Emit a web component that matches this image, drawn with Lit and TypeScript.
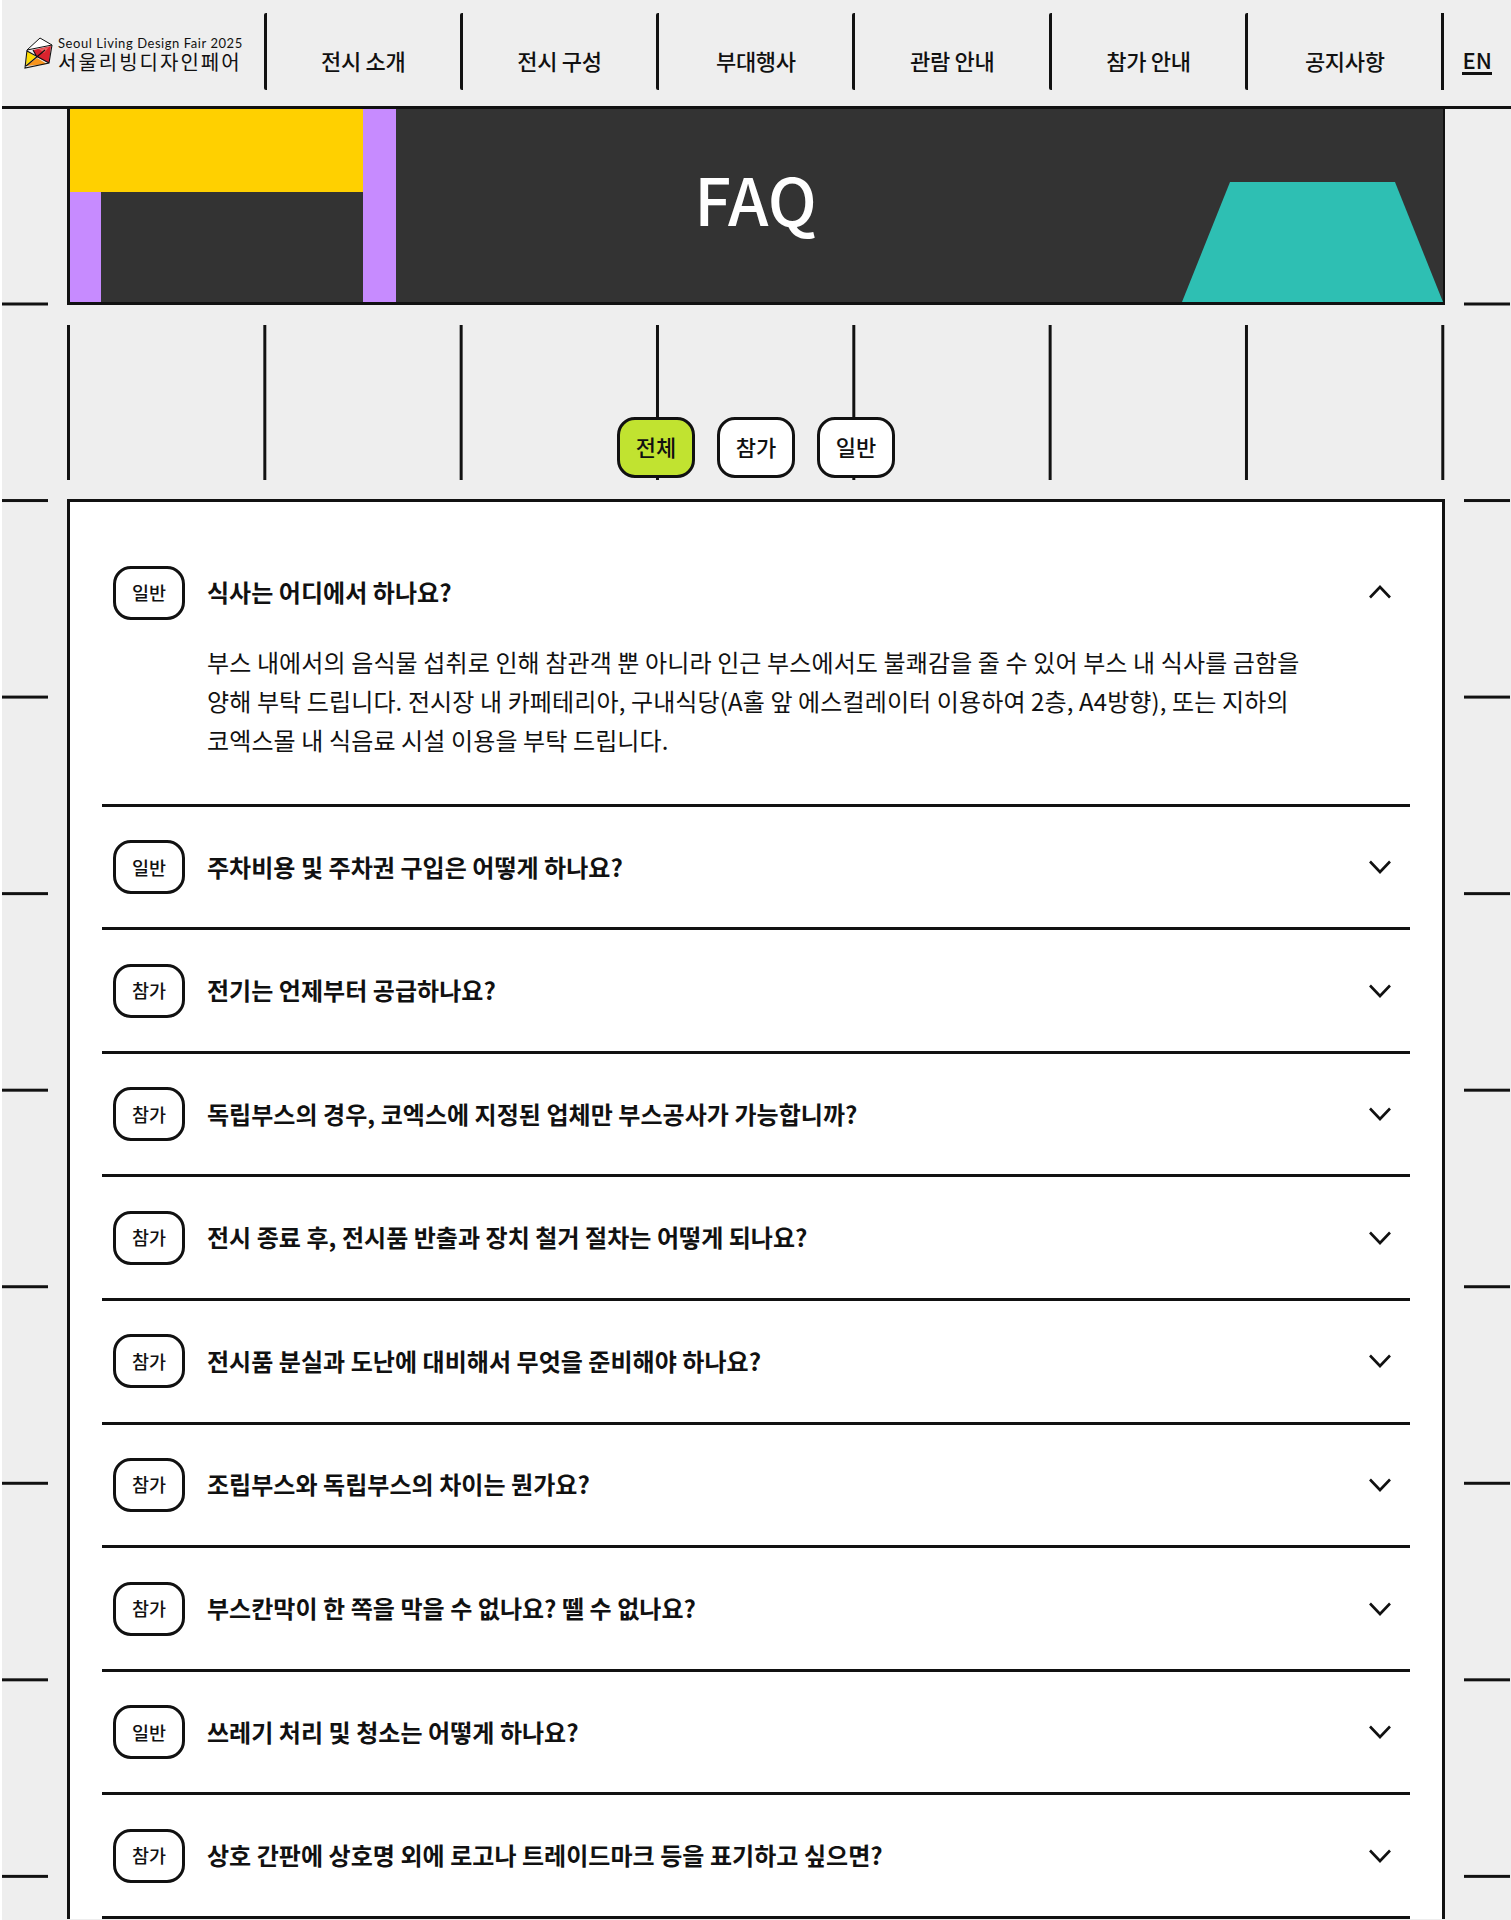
import { LitElement, html, css } from "lit";
import { customElement } from "lit/decorators.js";

const NAV = ["전시 소개", "전시 구성", "부대행사", "관람 안내", "참가 안내", "공지사항"];
const FILTERS = ["전체", "참가", "일반"];

const FAQS = [
  ["일반", "식사는 어디에서 하나요?"],
  ["일반", "주차비용 및 주차권 구입은 어떻게 하나요?"],
  ["참가", "전기는 언제부터 공급하나요?"],
  ["참가", "독립부스의 경우, 코엑스에 지정된 업체만 부스공사가 가능합니까?"],
  ["참가", "전시 종료 후, 전시품 반출과 장치 철거 절차는 어떻게 되나요?"],
  ["참가", "전시품 분실과 도난에 대비해서 무엇을 준비해야 하나요?"],
  ["참가", "조립부스와 독립부스의 차이는 뭔가요?"],
  ["참가", "부스칸막이 한 쪽을 막을 수 없나요? 뗄 수 없나요?"],
  ["일반", "쓰레기 처리 및 청소는 어떻게 하나요?"],
  ["참가", "상호 간판에 상호명 외에 로고나 트레이드마크 등을 표기하고 싶으면?"],
];

const ANSWER =
  "부스 내에서의 음식물 섭취로 인해 참관객 뿐 아니라 인근 부스에서도 불쾌감을 줄 수 있어 부스 내 식사를 금함을 양해 부탁 드립니다. 전시장 내 카페테리아, 구내식당(A홀 앞 에스컬레이터 이용하여 2층, A4방향), 또는 지하의 코엑스몰 내 식음료 시설 이용을 부탁 드립니다.";

@customElement("app-root")
export class AppRoot extends LitElement {
  static styles = css`
    :host {
      display: block;
      font-family: "Noto Sans CJK KR", "Noto Sans", sans-serif;
      color: #111;
    }
    .page {
      height: 1920px;
      overflow: hidden;
      margin-left: 2px;
      background: #eee;
    }
    .top {
      display: flex;
      height: 109px;
      padding-top: 13px;
      box-sizing: border-box;
      border-bottom: 3px solid #111;
    }
    .logo {
      width: 261.5px;
      height: 77px;
      padding: 23px 0 0 22px;
      box-sizing: border-box;
      display: flex;
      gap: 4px;
      flex: none;
    }
    .logo svg {
      flex: none;
    }
    .logo-en {
      font-family: Lato, "Noto Sans", sans-serif;
      font-size: 13px;
      line-height: 14px;
      letter-spacing: 0.56px;
      white-space: nowrap;
    }
    .logo-ko {
      font-size: 20px;
      line-height: 23px;
      letter-spacing: 2px;
      white-space: nowrap;
    }
    .nav-item {
      width: 196.33px;
      height: 77px;
      box-sizing: border-box;
      flex: none;
      border-left: 3px solid #111;
      border-radius: 2px 0 0 2px;
      display: flex;
      align-items: center;
      justify-content: center;
      padding-top: 17px;
      font-size: 22px;
      font-weight: 500;
      letter-spacing: -0.3px;
    }
    .lang {
      flex: 1;
      height: 77px;
      box-sizing: border-box;
      border-left: 3px solid #111;
      padding: 19px 0 0 18px;
      display: flex;
      align-items: center;
    }
    .lang span {
      font-size: 22px;
      font-weight: 500;
      line-height: 25px;
      border-bottom: 3px solid #111;
    }
    .body {
      background-image:
        linear-gradient(#111 0 2.5px, transparent 2.5px),
        linear-gradient(#111 0 2.5px, transparent 2.5px);
      background-size: 46px 196.56px;
      background-repeat: repeat-y;
      background-position: 0 193.5px, 1462px 193.5px;
    }
    .hero {
      margin-left: 65px;
      width: 1378px;
      height: 196px;
      box-sizing: border-box;
      border-left: 3px solid #111;
      border-right: 2px solid #111;
      border-bottom: 3px solid #111;
      background: #333;
      display: grid;
      grid-template-columns: 31px 262px 33px 1fr 261px;
      grid-template-rows: 83px 1fr;
    }
    .yellow {
      grid-area: 1 / 1 / 2 / 3;
      background: #ffd000;
    }
    .purple-a {
      grid-area: 2 / 1 / 3 / 2;
      background: #c78bff;
    }
    .purple-b {
      grid-area: 1 / 3 / 3 / 4;
      background: #c78bff;
    }
    .teal {
      grid-area: 1 / 5 / 3 / 6;
      align-self: end;
      height: 120px;
      background: #2ebfb3;
      clip-path: polygon(18.4% 0, 81.6% 0, 100% 100%, 0 100%);
    }
    .hero h1 {
      grid-area: 1 / 1 / 3 / -1;
      place-self: center;
      margin: 0 2px 14px 0;
      color: #fff;
      font-size: 65px;
      font-weight: 500;
      line-height: 1;
    }
    .filters {
      margin-left: 65px;
      width: 1378px;
      height: 193.5px;
      box-sizing: border-box;
      padding-bottom: 21px;
      display: flex;
      justify-content: center;
      align-items: flex-end;
      gap: 22.5px;
      background-image: linear-gradient(90deg, #111 0 2.5px, transparent 2.5px);
      background-size: 196.33px 155px;
      background-position: 0 20px;
      background-repeat: repeat-x;
    }
    .filters button {
      width: 77.5px;
      height: 61px;
      border: 3px solid #111;
      border-radius: 18px;
      background: #fff;
      color: #111;
      font: 500 22px "Noto Sans CJK KR", sans-serif;
      padding: 0 0 3px;
    }
    .filters button.on {
      background: #c1e330;
    }
    .panel {
      margin-left: 65px;
      width: 1378px;
      box-sizing: border-box;
      border: 3px solid #111;
      border-bottom: 0;
      background: #fff;
      padding: 31px 32px 0 32px;
    }
    .row {
      border-bottom: 3px solid #111;
    }
    .head {
      display: flex;
      align-items: center;
      padding: 33.3px 19px 33.3px 11px;
    }
    .badge {
      width: 72px;
      height: 54px;
      box-sizing: border-box;
      flex: none;
      border: 3px solid #111;
      border-radius: 18px;
      padding-bottom: 1px;
      display: flex;
      align-items: center;
      justify-content: center;
      font-size: 18.5px;
      font-weight: 500;
    }
    .q {
      flex: 1;
      margin-left: 22px;
      padding-bottom: 2px;
      font-size: 24px;
      font-weight: 700;
      letter-spacing: 0.04px;
    }
    .answer {
      margin: -10px 0 0;
      padding: 0 90px 44.5px 105px;
      font-size: 24px;
      line-height: 38.7px;
      letter-spacing: 0.12px;
      word-break: keep-all;
    }
    .chev {
      flex: none;
      display: block;
    }
    .chev.open {
      margin-top: -2px;
    }
  `;

  private chevron(open: boolean) {
    return html`<svg class="chev ${open ? "open" : ""}" width="22" height="14" viewBox="0 0 22 14" fill="none" stroke="#111" stroke-width="2.6">
      <path d=${open ? "M1 12.5 L11 2 L21 12.5" : "M1 1.5 L11 12 L21 1.5"}></path>
    </svg>`;
  }

  render() {
    return html`
      <div class="page">
        <header class="top">
          <div class="logo">
            <svg width="30" height="34" viewBox="24 36 30 34">
              <path d="M40 38 L27 50 L52 45 Z" fill="#fff" stroke="#111" stroke-width="1"></path>
              <path d="M33 50 L51 46 L49 63 L37 57 Z" fill="#d9232e"></path>
              <path d="M39 49 L49 47 L44 53 Z" fill="#e8615f"></path>
              <path d="M27 51 L36 57 L26 65 Z" fill="#ffdd00"></path>
              <path d="M26 66 L37 58 L47 64 Z" fill="#f7941d"></path>
              <path d="M27 50 L25 68 L49 63 L52 45 M27 51 L49 63 M26 66 L45 50 M33 50 L37 57" fill="none" stroke="#111" stroke-width="1.1"></path>
            </svg>
            <div>
              <div class="logo-en">Seoul Living Design Fair 2025</div>
              <div class="logo-ko">서울리빙디자인페어</div>
            </div>
          </div>
          ${NAV.map((n) => html`<div class="nav-item">${n}</div>`)}
          <div class="lang"><span>EN</span></div>
        </header>

        <div class="body">
          <section class="hero">
            <div class="yellow"></div>
            <div class="purple-a"></div>
            <div class="purple-b"></div>
            <div class="teal"></div>
            <h1>FAQ</h1>
          </section>

          <nav class="filters">
            ${FILTERS.map((f, i) => html`<button class=${i === 0 ? "on" : ""}>${f}</button>`)}
          </nav>

          <main class="panel">
            ${FAQS.map(
              ([tag, q], i) => html`
                <div class="row">
                  <div class="head">
                    <span class="badge">${tag}</span>
                    <span class="q">${q}</span>
                    ${this.chevron(i === 0)}
                  </div>
                  ${i === 0 ? html`<p class="answer">${ANSWER}</p>` : ""}
                </div>
              `
            )}
          </main>
        </div>
      </div>
    `;
  }
}
